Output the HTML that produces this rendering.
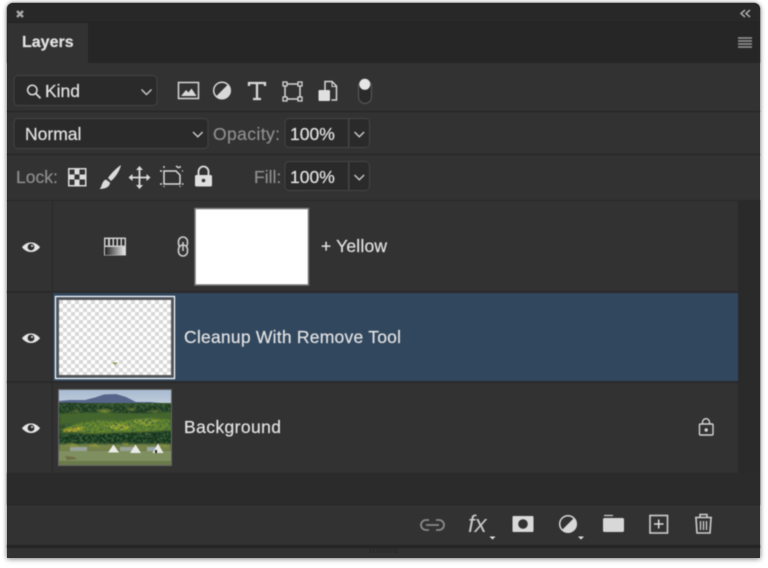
<!DOCTYPE html>
<html><head><meta charset="utf-8"><style>
html,body{margin:0;padding:0;width:768px;height:568px;background:#fff;overflow:hidden}
#p{position:absolute;left:7px;top:3px;width:753px;height:555px;border-radius:6px 6px 0 0;background:#323232;box-shadow:0 0 5px rgba(0,0,0,.45),0 2px 6px rgba(0,0,0,.2)}
svg{position:absolute;left:0;top:0;filter:blur(.4px)}
text{font-family:"Liberation Sans",sans-serif;font-size:17.5px;fill:#e2e2e2;stroke:#e2e2e2;stroke-width:.2px}
text.g{fill:#8e8e8e;stroke:#8e8e8e}
</style></head><body><div id="p"></div>
<svg width="768" height="568" viewBox="0 0 768 568" xmlns="http://www.w3.org/2000/svg">
<defs>
<pattern id="ck" width="8" height="8" patternUnits="userSpaceOnUse" x="59" y="300"><rect width="8" height="8" fill="#fff"/><rect width="4" height="4" fill="#d8d8d8"/><rect x="4" y="4" width="4" height="4" fill="#d8d8d8"/></pattern>
<linearGradient id="gr" x1="0" x2="1"><stop offset="0" stop-color="#222"/><stop offset="1" stop-color="#e8e8e8"/></linearGradient>
<linearGradient id="sk" x1="0" x2="0" y1="0" y2="1"><stop offset="0" stop-color="#a9bcd2"/><stop offset="1" stop-color="#d3dbe2"/></linearGradient>
<clipPath id="pc"><rect x="59" y="390" width="112" height="75"/></clipPath>
<filter id="b"><feGaussianBlur stdDeviation=".7"/></filter>
<filter id="nz" x="0" y="0" width="100%" height="100%"><feTurbulence type="fractalNoise" baseFrequency=".35 .45" numOctaves="2" seed="7"/><feColorMatrix values="0 0 0 0 .05  0 0 0 0 .13  0 0 0 0 .05  3.2 0 0 0 -1.35"/></filter>
</defs>
<!-- title + tab bars -->
<path d="M7 23V9a6 6 0 0 1 6-6h741a6 6 0 0 1 6 6v14z" fill="#282828"/>
<rect x="7" y="22" width="753" height="1" fill="#222"/>
<rect x="7" y="23" width="753" height="40" fill="#262626"/>
<rect x="8" y="23" width="80" height="40" fill="#323232"/>
<path d="M17 11l6 6M23 11l-6 6" stroke="#aaa" stroke-width="2.400" fill="none"/>
<path d="M745 10l-4 3.500 4 3.500M750 10l-4 3.500 4 3.500" stroke="#bbb" stroke-width="1.400" fill="none"/>
<text x="22" y="47" style="font-weight:700;font-size:16px">Layers</text>
<path d="M738 38h14M738 41h14M738 44h14M738 47h14" stroke="#999" stroke-width="1.500"/>
<!-- separators -->
<rect x="7" y="111" width="753" height="1" fill="#252525"/>
<rect x="7" y="154" width="753" height="1" fill="#252525"/>
<!-- Kind -->
<rect x="14" y="75.500" width="143" height="30" rx="4" fill="#2a2a2a" stroke="#454545"/>
<circle cx="32.300" cy="90" r="4.700" fill="none" stroke="#ddd" stroke-width="1.500"/><path d="M35.800 93.500l4.700 4.700" stroke="#ddd" stroke-width="1.800"/>
<text x="45" y="97">Kind</text>
<path d="M141.500 89.500l5 5 5-5" stroke="#ccc" stroke-width="1.400" fill="none"/>
<!-- filter icons -->
<rect x="178.500" y="82.500" width="20" height="16" fill="none" stroke="#d8d8d8" stroke-width="1.500"/>
<path d="M181 96l5-6 2.500 2.500 3-4 5 7.500z" fill="#d8d8d8"/>
<circle cx="222" cy="90.500" r="8.300" fill="none" stroke="#d8d8d8" stroke-width="1.500"/>
<path d="M228 84.500a8.300 8.300 0 0 1-11.800 11.800z" fill="#d8d8d8"/>
<path d="M249 86v-3h16v3M257 83v16M253 99h8" stroke="#d8d8d8" stroke-width="2.300" fill="none"/>
<rect x="285" y="84" width="15" height="15" fill="none" stroke="#d8d8d8" stroke-width="1.500"/>
<g fill="#323232" stroke="#d8d8d8" stroke-width="1.300"><rect x="283" y="82" width="4" height="4"/><rect x="298" y="82" width="4" height="4"/><rect x="283" y="97" width="4" height="4"/><rect x="298" y="97" width="4" height="4"/></g>
<path d="M325 90v-8.500h7l4.500 4.500v14h-5" fill="none" stroke="#d8d8d8" stroke-width="1.500"/><path d="M332 82v4.500h4.500" fill="none" stroke="#d8d8d8"/>
<rect x="318.500" y="90" width="11.500" height="11" rx="1" fill="#e0e0e0"/>
<rect x="358.500" y="80" width="13" height="23.500" rx="6.500" fill="#2a2a2a" stroke="#555" stroke-width="1.200"/>
<circle cx="364.800" cy="84.300" r="5.500" fill="#e6e6e6"/>
<!-- Normal row -->
<rect x="14" y="118.500" width="194" height="30" rx="4" fill="#2a2a2a" stroke="#454545"/>
<text x="25" y="140">Normal</text>
<path d="M193 132l4.800 4.800 4.800-4.800" stroke="#ccc" stroke-width="1.400" fill="none"/>
<text class="g" x="213" y="140" textLength="67">Opacity:</text>
<rect x="285" y="118.500" width="84.500" height="29" rx="4" fill="#2a2a2a" stroke="#454545"/>
<rect x="348" y="119" width="1.500" height="28" fill="#454545"/>
<text x="290" y="140">100%</text>
<path d="M354.500 132l4.800 4.800 4.800-4.800" stroke="#ccc" stroke-width="1.400" fill="none"/>
<!-- Lock row -->
<text class="g" x="16" y="183">Lock:</text>
<rect x="68" y="168" width="18.500" height="18.500" fill="#dcdcdc"/>
<g fill="#323232"><rect x="69.500" y="169.500" width="5" height="5"/><rect x="79.500" y="169.500" width="5.500" height="5"/><rect x="74.500" y="174.500" width="5" height="5"/><rect x="69.500" y="179.500" width="5" height="5.500"/><rect x="79.500" y="179.500" width="5.500" height="5.500"/></g>
<path d="M121 165c-3 2-9 7-13 13l3 3c5-4 9-11 10-16z" fill="#dcdcdc"/><path d="M106 179.500l4 3c0 4-4 6.500-10.500 6.500 2.500-1.500 2-8 6.500-9.500z" fill="#dcdcdc"/>
<path d="M139.500 167v21M129.500 177.500h20" stroke="#dcdcdc" stroke-width="1.800"/>
<path d="M136 170l3.500-4 3.500 4zM136 185l3.500 4 3.500-4zM132.500 174l-4 3.500 4 3.500zM146.500 174l4 3.500-4 3.500z" fill="#dcdcdc"/>
<path d="M164 171h12l4 4v9h-16z" fill="none" stroke="#dcdcdc" stroke-width="1.500"/>
<path d="M164 166v2M160 171h2M180 166v2M183 171h-1M164 187v-1M160 184h2M182 184h1.500M180 187v-1M176 166l3 2" stroke="#dcdcdc" stroke-width="1.400" fill="none"/>
<path d="M198.500 175v-3.500a5 5 0 0 1 10 0v3.500" fill="none" stroke="#e0e0e0" stroke-width="1.800"/>
<rect x="195" y="175" width="17" height="11.500" rx="1.500" fill="#e0e0e0"/><circle cx="203.500" cy="180.500" r="1.800" fill="#323232"/>
<text class="g" x="254" y="183">Fill:</text>
<rect x="285" y="161.500" width="84.500" height="29" rx="4" fill="#2a2a2a" stroke="#454545"/>
<rect x="348" y="162" width="1.500" height="28" fill="#454545"/>
<text x="290" y="183">100%</text>
<path d="M354.500 175l4.800 4.800 4.800-4.800" stroke="#ccc" stroke-width="1.400" fill="none"/>
<!-- layers -->
<rect x="7" y="200" width="753" height="1" fill="#2a2a2a"/>
<rect x="738" y="201" width="22" height="272" fill="#2a2a2a"/>
<rect x="7" y="291" width="731" height="2" fill="#2a2a2a"/>
<rect x="7" y="381" width="731" height="2" fill="#2a2a2a"/>
<rect x="52" y="201" width="1" height="272" fill="#2a2a2a"/>
<rect x="7" y="473" width="753" height="31" fill="#2b2b2b"/>
<rect x="7" y="504" width="753" height="1" fill="#262626"/>
<rect x="53" y="293" width="685" height="88" fill="#31475e"/>
<!-- eyes -->
<g><path d="M22 247.200c5-6.400 13-6.400 18 0-5 6.400-13 6.400-18 0z" fill="#e6e6e6"/><circle cx="31" cy="247" r="3.400" fill="#2d2d2d"/><circle cx="32" cy="246" r="1" fill="#e6e6e6"/></g>
<g transform="translate(0 91)"><path d="M22 247.200c5-6.400 13-6.400 18 0-5 6.400-13 6.400-18 0z" fill="#e6e6e6"/><circle cx="31" cy="247" r="3.400" fill="#2d2d2d"/><circle cx="32" cy="246" r="1" fill="#e6e6e6"/></g>
<g transform="translate(0 181)"><path d="M22 247.200c5-6.400 13-6.400 18 0-5 6.400-13 6.400-18 0z" fill="#e6e6e6"/><circle cx="31" cy="247" r="3.400" fill="#2d2d2d"/><circle cx="32" cy="246" r="1" fill="#e6e6e6"/></g>
<!-- adjustment -->
<rect x="104" y="237.500" width="22" height="18" fill="#cfcfcf"/>
<rect x="105" y="247" width="20" height="8" fill="url(#gr)"/>
<g fill="#2a2a2a"><rect x="105.500" y="239" width="2.500" height="6.500"/><rect x="110" y="239" width="2.500" height="6.500"/><rect x="114" y="239" width="2.500" height="6.500"/><rect x="118" y="239" width="2.500" height="6.500"/><rect x="122" y="239" width="2.500" height="6.500"/></g>
<!-- chain -->
<rect x="178.500" y="237" width="9" height="11" rx="4.500" fill="none" stroke="#cfcfcf" stroke-width="1.600"/>
<rect x="178.500" y="245" width="9" height="11" rx="4.500" fill="#323232" stroke="#cfcfcf" stroke-width="1.600"/>
<path d="M183 242v9" stroke="#cfcfcf" stroke-width="1.600"/>
<!-- mask -->
<rect x="195" y="208.500" width="113.500" height="76.500" fill="#fff" stroke="#777" stroke-width="1.500"/>
<text x="321" y="252" textLength="66">+ Yellow</text>
<!-- transparent thumb -->
<rect x="55.500" y="296.500" width="119" height="82" fill="none" stroke="#fff" stroke-width="1.300"/>
<rect x="57" y="298" width="116" height="79" fill="#555"/>
<rect x="59" y="300" width="112" height="75" fill="url(#ck)"/>
<path d="M112 362.500h6l-2.500 2-.5 2-.5-2z" fill="#8d9a52"/>
<text x="184" y="343" textLength="217">Cleanup With Remove Tool</text>
<!-- photo -->
<rect x="58" y="389" width="114" height="77" fill="#666"/>
<g clip-path="url(#pc)">
<rect x="59" y="390" width="112" height="28" fill="url(#sk)"/>
<path d="M59 401l10-1 16 0 10-2.500 9-3 12-.5 10 3 10 5 14 0 21 2v8H59z" fill="#56658a"/>
<rect x="59" y="403" width="112" height="47" fill="#2d4a25"/>
<path d="M59 403c12-1 24 0 36 2 20 2 50 1 76 0v7c-30 2-80 2-112 1z" fill="#1f3a20"/>
<g filter="url(#b)">
<path d="M60 414c20-2 40-2 60-1s35 1 51-1v10c-30 3-80 3-111 2z" fill="#466627"/>
<path d="M60 430c12-6 22-7 34-9 14-2 20 1 30 0 8-1 16-2 26-3l21 2v10l-30 2-50 2z" fill="#6b8a2c"/>
<path d="M62 432c5-4 12-5 20-5 3 2-1 4-9 5z" fill="#c4b02c"/>
<path d="M104 427c10-3 16-4 28-2 3 2-6 5-12 5z" fill="#a0aa33"/>
<path d="M130 421c10-3 20-2 30 0l-14 5z" fill="#8ba030"/>
<path d="M95 410l12-1 6 2-9 2zM125 409l10-1-2 3zM148 411l12-1-4 3zM70 411l8-1 1 2z" fill="#7f8a2e"/>
<path d="M59 436c30-3 80-4 112-5v14H59z" fill="#19361b"/>
<path d="M59 444h112v7H59z" fill="#74834a"/>
<path d="M64 445c6-3 12-2 16 2zM88 446c5-3 9-4 12 1zM120 444c6-2 10-1 14 2zM158 445c3-2 7-2 10 2z" fill="#8f9540"/>
</g>
<rect x="59" y="403" width="112" height="42" filter="url(#nz)"/>
<rect x="70" y="447" width="17" height="4" fill="#9aa39b"/><rect x="120" y="447" width="14" height="4" fill="#9aa39b"/><rect x="147" y="447" width="9" height="4" fill="#9aa8ac"/>
<rect x="59" y="451" width="112" height="14" fill="#7f8f5f"/>
<rect x="59" y="461" width="112" height="4" fill="#6b7a4a"/>
<path d="M65 456l9 1 3 2-10 1z" fill="#6d6f43"/>
<path d="M113.500 444.500l-5.500 8h11zM135.500 444.500l-5.500 8.500h11zM158 443.500l-5.500 9.500h11z" fill="#e9ebe6"/>
<rect x="155" y="450" width="2" height="3" fill="#222"/>
</g>
<text x="184" y="433" textLength="97">Background</text>
<path d="M702.500 424v-1.800a3.500 3.500 0 0 1 7 0v1.800" fill="none" stroke="#d5d5d5" stroke-width="1.400"/>
<rect x="699.500" y="424" width="13.500" height="11" rx="1" fill="none" stroke="#d5d5d5" stroke-width="1.400"/>
<circle cx="706.200" cy="430" r="1.700" fill="#d5d5d5"/>
<!-- bottom toolbar -->
<g fill="none" stroke="#8b8b8b" stroke-width="1.800"><path d="M429 520h-3a5 5 0 0 0 0 10h3M436 520h3a5 5 0 0 1 0 10h-3M426 525h13"/></g>
<text x="468" y="532" style="font-style:italic;font-size:24px;fill:#c9c9c9;stroke:none">fx</text>
<path d="M489.500 536.500h6l-3 3z" fill="#e5e5e5"/>
<rect x="512.500" y="516" width="21" height="16" rx="1" fill="#dadada"/><circle cx="523" cy="524" r="4.800" fill="#323232"/>
<circle cx="568" cy="524" r="8.300" fill="none" stroke="#d8d8d8" stroke-width="1.500"/>
<path d="M574 518a8.300 8.300 0 0 1-11.800 11.800z" fill="#d8d8d8"/>
<path d="M578 536.500h6l-3 3z" fill="#e5e5e5"/>
<path d="M604 515.500h9" stroke="#d8d8d8" stroke-width="1.200"/>
<rect x="603" y="518" width="21" height="14" rx="1.500" fill="#d8d8d8"/>
<rect x="650" y="515.500" width="17.500" height="17.500" fill="none" stroke="#cfcfcf" stroke-width="1.600"/>
<path d="M658.700 519.500v9M654 524h9.500" stroke="#e0e0e0" stroke-width="1.500"/>
<path d="M695 517.500h17M700 517v-2.500h7v2.500" fill="none" stroke="#cfcfcf" stroke-width="1.500"/>
<path d="M696 518l1 15h13l1-15" fill="none" stroke="#cfcfcf" stroke-width="1.600"/>
<path d="M700.500 521v9M703.500 521v9M706.500 521v9" stroke="#cfcfcf" stroke-width="1.300"/>
<rect x="7" y="545" width="753" height="3" fill="#242424"/>
<path d="M370.500 548v5M373.500 548v5M376.500 548v5M379.500 548v5M382.500 548v5M385.500 548v5M388.500 548v5M391.500 548v5M394.500 548v5M396.500 548v5" stroke="#272727" stroke-width="1"/>
</svg></body></html>
